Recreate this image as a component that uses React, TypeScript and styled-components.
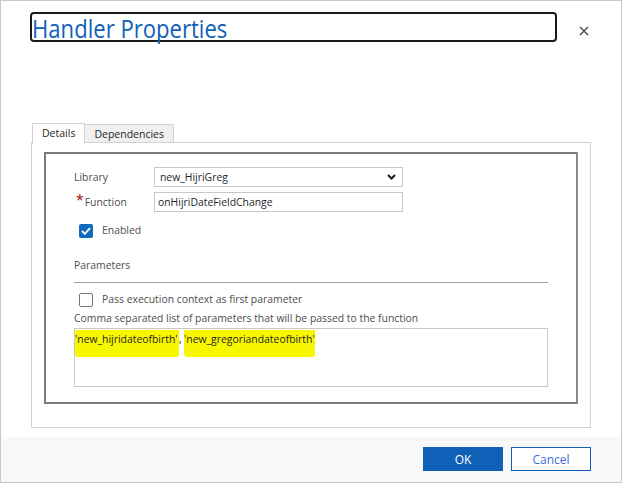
import styled, { createGlobalStyle } from "styled-components";

const GlobalStyle = createGlobalStyle`
  html, body {
    margin: 0;
    padding: 0;
    background: #ffffff;
  }
  body {
    font-family: "Open Sans", "Liberation Sans", Arial, sans-serif;
    color: #323130;
  }
`;

const Dialog = styled.div`
  position: relative;
  box-sizing: border-box;
  width: 622px;
  height: 483px;
  border: 1px solid #c8c8c8;
  background: #ffffff;
  display: flex;
  flex-direction: column;

  &::after {
    content: "";
    position: absolute;
    left: 28px;
    right: -2px;
    bottom: -3px;
    height: 2px;
    background: #4a4a4a;
  }
`;

const Header = styled.div`
  display: flex;
  align-items: flex-start;
  padding: 11px 0 0 29px;
  height: 30px;
`;

const TitleBox = styled.div`
  box-sizing: border-box;
  width: 527px;
  height: 30px;
  border: 2px solid #1a1a1a;
  border-radius: 4px;
  display: flex;
  align-items: center;
`;

const Title = styled.h1`
  margin: 1px 0 0 0;
  font-family: "Open Sans", "Liberation Sans", Arial, sans-serif;
  font-weight: 400;
  font-size: 26px;
  line-height: 26px;
  color: #1160b7;
  white-space: nowrap;
  transform: scaleX(0.85);
  transform-origin: left center;
`;

const CloseButton = styled.button`
  margin: 13px 0 0 21px;
  padding: 0;
  width: 12px;
  height: 12px;
  border: none;
  background: transparent;
  display: flex;
  align-items: center;
  justify-content: center;
`;

const Body = styled.div`
  margin: 81px 30px 0 30px;
  display: flex;
  flex-direction: column;
`;

const TabRow = styled.div`
  display: flex;
  align-items: flex-end;
  height: 20px;
  padding-left: 1px;
  position: relative;
  z-index: 1;
`;

const Tab = styled.div<{ $active?: boolean }>`
  box-sizing: border-box;
  height: ${(p) => (p.$active ? "21px" : "19px")};
  margin-bottom: ${(p) => (p.$active ? "-1px" : "0")};
  padding: ${(p) => (p.$active ? "0 9px 2px 9px" : "0 9px")};
  border: 1px solid #d2d2d2;
  border-bottom: ${(p) => (p.$active ? "none" : "1px solid #d2d2d2")};
  background: ${(p) => (p.$active ? "#ffffff" : "#f0f0f0")};
  font-size: 10.5px;
  color: #1f1f1f;
  display: flex;
  align-items: center;
  & + & {
    border-left: none;
  }
`;

const Panel = styled.div`
  box-sizing: border-box;
  height: 286px;
  margin-top: -1px;
  border: 1px solid #d2d2d2;
  padding: 9px 12px 0 12px;
`;

const Fieldset = styled.div`
  box-sizing: border-box;
  height: 252px;
  border: 2px solid #7a7a7a;
  border-right-color: #8a8a8a;
  padding: 13px 28px 0 28px;
  display: flex;
  flex-direction: column;
  font-size: 10.4px;
  line-height: 15px;
`;

const FieldRow = styled.div<{ $mt?: number }>`
  display: flex;
  align-items: center;
  margin-top: ${(p) => p.$mt ?? 0}px;
`;

const Label = styled.label`
  width: 80px;
  color: #4d4d4d;
  display: flex;
  align-items: baseline;
`;

const Required = styled.span`
  color: #a80000;
  font-size: 14px;
  line-height: 10px;
  margin: 0 1px 0 2px;
  position: relative;
  top: -1px;
`;

const SelectBox = styled.div`
  box-sizing: border-box;
  width: 249px;
  height: 20px;
  border: 1px solid #c8c8c8;
  display: flex;
  align-items: center;
  justify-content: space-between;
  padding: 0 6px 0 5px;
  color: #1f1f1f;
`;

const TextInput = styled.div`
  box-sizing: border-box;
  width: 249px;
  height: 20px;
  border: 1px solid #c8c8c8;
  display: flex;
  align-items: center;
  padding: 0 3px;
  color: #1f1f1f;
`;

const Check = styled.span<{ $checked?: boolean }>`
  box-sizing: border-box;
  width: 14px;
  height: 14px;
  border-radius: 2px;
  margin-left: 5px;
  border: ${(p) => (p.$checked ? "none" : "1.5px solid #767676")};
  background: ${(p) => (p.$checked ? "#0f6cbd" : "#ffffff")};
  display: flex;
  align-items: center;
  justify-content: center;
`;

const CheckText = styled.span`
  margin-left: 9px;
  color: #4d4d4d;
`;

const SectionTitle = styled.div`
  margin-top: 20px;
  color: #4d4d4d;
  padding-bottom: 9px;
  border-bottom: 1.5px solid #a0a0a0;
`;

const Hint = styled.div`
  margin-top: 4px;
  color: #4d4d4d;
`;

const TextArea = styled.div`
  box-sizing: border-box;
  height: 59px;
  margin-top: 2px;
  border: 1px solid #c8c8c8;
  padding: 1px 0 0 0;
  color: #1f1f1f;
  display: flex;
  align-items: flex-start;
`;

const Mark = styled.span<{ $w: number }>`
  display: inline-block;
  box-sizing: border-box;
  width: ${(p) => p.$w}px;
  height: 27px;
  padding-top: 2px;
  background: #f7f700;
  border-radius: 0 0 3px 3px;
  white-space: nowrap;
`;

const Comma = styled.span`
  display: inline-block;
  width: 5px;
  padding-top: 2px;
`;

const Footer = styled.div`
  box-sizing: border-box;
  margin-top: auto;
  height: 45px;
  background: #f8f8f8;
  display: flex;
  justify-content: flex-end;
  align-items: flex-start;
  padding: 10px 30px 0 0;
  gap: 8px;
`;

const Button = styled.button<{ $primary?: boolean }>`
  box-sizing: border-box;
  width: 80px;
  height: 24px;
  font-family: "Open Sans", "Liberation Sans", Arial, sans-serif;
  font-size: 12px;
  border: 1px solid #1160b7;
  background: ${(p) => (p.$primary ? "#1160b7" : "#ffffff")};
  color: ${(p) => (p.$primary ? "#ffffff" : "#3b6fd4")};
  padding: 0;
`;

const Chevron = () => (
  <svg width="9" height="6" viewBox="0 0 9 6">
    <path d="M1 1 L4.5 4.5 L8 1" fill="none" stroke="#1a1a1a" strokeWidth="2" />
  </svg>
);

const CheckMark = () => (
  <svg width="10" height="8" viewBox="0 0 10 8">
    <path d="M1 4 L3.8 6.8 L9 1.2" fill="none" stroke="#ffffff" strokeWidth="1.8" />
  </svg>
);

const CloseIcon = () => (
  <svg width="10" height="10" viewBox="0 0 10 10">
    <path d="M1 1 L9 9 M9 1 L1 9" stroke="#505050" strokeWidth="1.5" />
  </svg>
);

const App = () => {
  return (
    <>
      <GlobalStyle />
      <Dialog>
        <Header>
          <TitleBox>
            <Title>Handler Properties</Title>
          </TitleBox>
          <CloseButton aria-label="Close">
            <CloseIcon />
          </CloseButton>
        </Header>

        <Body>
          <TabRow>
            <Tab $active>Details</Tab>
            <Tab>Dependencies</Tab>
          </TabRow>
          <Panel>
            <Fieldset>
              <FieldRow>
                <Label>Library</Label>
                <SelectBox>
                  <span>new_HijriGreg</span>
                  <Chevron />
                </SelectBox>
              </FieldRow>
              <FieldRow $mt={5}>
                <Label>
                  <Required>*</Required>Function
                </Label>
                <TextInput>onHijriDateFieldChange</TextInput>
              </FieldRow>
              <FieldRow $mt={11}>
                <Check $checked>
                  <CheckMark />
                </Check>
                <CheckText>Enabled</CheckText>
              </FieldRow>

              <SectionTitle>Parameters</SectionTitle>
              <FieldRow $mt={9}>
                <Check />
                <CheckText>Pass execution context as first parameter</CheckText>
              </FieldRow>
              <Hint>Comma separated list of parameters that will be passed to the function</Hint>
              <TextArea>
                <Mark $w={104}>'new_hijridateofbirth'</Mark>
                <Comma>,</Comma>
                <Mark $w={131}>'new_gregoriandateofbirth'</Mark>
              </TextArea>
            </Fieldset>
          </Panel>
        </Body>

        <Footer>
          <Button $primary>OK</Button>
          <Button>Cancel</Button>
        </Footer>
      </Dialog>
    </>
  );
};

export default App;
